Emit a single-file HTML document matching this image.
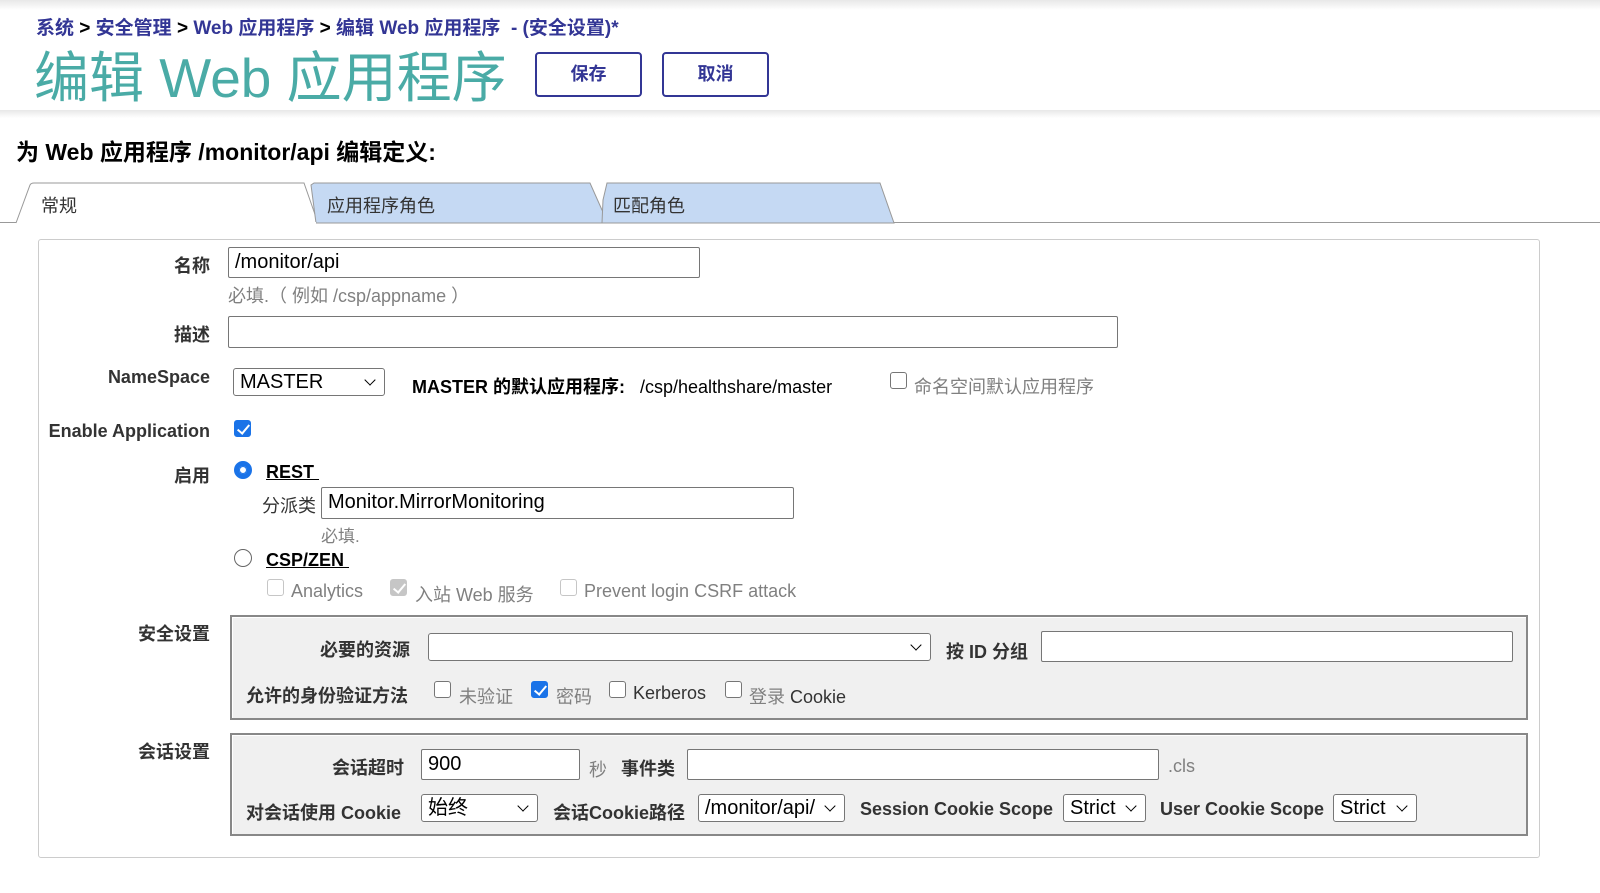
<!DOCTYPE html>
<html><head><meta charset="utf-8"><style>
*{box-sizing:border-box;margin:0;padding:0}
body{width:1600px;height:893px;position:relative;background:#fff;font-family:"Liberation Sans","Noto Sans CJK SC",sans-serif;color:#000;overflow:hidden}
.a{position:absolute;white-space:nowrap}
.lbl{font-size:18px;font-weight:bold;color:#333;text-align:right}
.inp{position:absolute;border:1px solid #767676;border-radius:2px;background:#fff;font-size:20px;padding:2px 6px;line-height:24px}
.sel{position:absolute;border:1px solid #767676;border-radius:3px;background:#fff;font-size:20px;padding:0 6px;line-height:26px}
.sel:after{content:"";position:absolute;right:10px;top:7px;width:7px;height:7px;border-right:1.5px solid #000;border-bottom:1.5px solid #000;transform:rotate(45deg)}
.cb{position:absolute;width:17px;height:17px;border:1px solid #767676;border-radius:3px;background:#fff}
.cb.on{background:#1a73e8;border-color:#1a73e8}
.cb.on:after{content:"";position:absolute;left:5px;top:1px;width:5px;height:10px;border-right:2px solid #fff;border-bottom:2px solid #fff;transform:rotate(40deg)}
.cb.dis{border-color:#c6c6c6}
.cb.dison{background:#c6c6c6;border-color:#c6c6c6}
.cb.dison:after{content:"";position:absolute;left:5px;top:1px;width:5px;height:10px;border-right:2px solid #fff;border-bottom:2px solid #fff;transform:rotate(40deg)}
.gray{color:#808080}
.box{position:absolute;border:2px solid #888;background:#f0f0f0;box-shadow:inset 1px 1px 0 #fff}
</style></head><body>
<div class="a" style="left:0;top:0;width:1600px;height:10px;background:linear-gradient(#e8e8e8,#fff)"></div>
<div class="a" style="left:36px;top:13px;font-size:19px;font-weight:bold;color:#333695">系统 <span style="color:#000">&gt;</span> 安全管理 <span style="color:#000">&gt;</span> Web 应用程序 <span style="color:#000">&gt;</span> 编辑 Web 应用程序 &nbsp;- (安全设置)*</div>
<div class="a" style="left:34px;top:45px;font-size:55px;color:#4aaba6;line-height:66px">编辑 Web 应用程序</div>
<div class="a" style="left:535px;top:52px;width:107px;height:45px;border:2px solid #333695;border-radius:4px;font-size:18px;font-weight:bold;color:#333695;text-align:center;line-height:41px">保存</div>
<div class="a" style="left:662px;top:52px;width:107px;height:45px;border:2px solid #333695;border-radius:4px;font-size:18px;font-weight:bold;color:#333695;text-align:center;line-height:41px">取消</div>
<div class="a" style="left:0;top:110px;width:1600px;height:8px;background:linear-gradient(#e8e8e8,#fff)"></div>
<div class="a" style="left:16px;top:133px;font-size:23px;font-weight:bold">为 Web 应用程序 /monitor/api 编辑定义:</div>
<svg class="a" style="left:0;top:180px" width="1600" height="46">
<line x1="0" y1="42.5" x2="1600" y2="42.5" stroke="#999" stroke-width="1"/>
<path d="M16 43 L30 5 Q31 3 34 3 L304 3 L318 43" fill="#fff" stroke="#999"/>
<path d="M316 43 L311 5 L314 3 L590 3 L602 30 L610 43 Z" fill="#c5d9f3" stroke="#999"/>
<path d="M602 43 L603 20 L607 3 L880 3 L894 43 Z" fill="#c5d9f3" stroke="#999"/>
<line x1="17" y1="43" x2="316" y2="43" stroke="#fff" stroke-width="2"/>
</svg>
<div class="a" style="left:41px;top:192px;font-size:18px;color:#333">常规</div>
<div class="a" style="left:327px;top:192px;font-size:18px;color:#333">应用程序角色</div>
<div class="a" style="left:613px;top:192px;font-size:18px;color:#333">匹配角色</div>
<div class="a" style="left:38px;top:239px;width:1502px;height:619px;border:1px solid #ccc;border-radius:3px"></div>

<div class="a lbl" style="left:100px;width:110px;top:252px">名称</div>
<div class="inp" style="left:228px;top:247px;width:472px;height:31px">/monitor/api</div>
<div class="a gray" style="left:228px;top:282px;font-size:18px">必填.（ 例如 /csp/appname ）</div>
<div class="a lbl" style="left:100px;width:110px;top:321px">描述</div>
<div class="inp" style="left:228px;top:316px;width:890px;height:32px"></div>
<div class="a lbl" style="left:60px;width:150px;top:367px">NameSpace</div>
<div class="sel" style="left:233px;top:368px;width:152px;height:28px">MASTER</div>
<div class="a" style="left:412px;top:373px;font-size:18px"><b>MASTER 的默认应用程序:</b> &nbsp;&nbsp;/csp/healthshare/master</div>
<div class="cb" style="left:890px;top:372px"></div>
<div class="a gray" style="left:914px;top:373px;font-size:18px">命名空间默认应用程序</div>
<div class="a lbl" style="left:40px;width:170px;top:421px">Enable Application</div>
<div class="cb on" style="left:234px;top:420px"></div>
<div class="a lbl" style="left:100px;width:110px;top:462px">启用</div>
<div class="a" style="left:234px;top:461px;width:18px;height:18px;border:5px solid #1a73e8;border-radius:50%;box-shadow:0 0 0 1px #1a73e8 inset"></div>
<div class="a" style="left:266px;top:462px;font-size:18px;font-weight:bold;text-decoration:underline">REST&nbsp;</div>
<div class="a" style="left:262px;top:492px;font-size:18px;color:#333">分派类</div>
<div class="inp" style="left:321px;top:487px;width:473px;height:32px">Monitor.MirrorMonitoring</div>
<div class="a gray" style="left:321px;top:522px;font-size:17px">必填.</div>
<div class="a" style="left:234px;top:549px;width:18px;height:18px;border:1px solid #666;border-radius:50%"></div>
<div class="a" style="left:266px;top:550px;font-size:18px;font-weight:bold;text-decoration:underline">CSP/ZEN&nbsp;</div>
<div class="cb dis" style="left:267px;top:579px"></div>
<div class="a gray" style="left:291px;top:581px;font-size:18px">Analytics</div>
<div class="cb dison" style="left:390px;top:579px"></div>
<div class="a gray" style="left:415px;top:581px;font-size:18px">入站 Web 服务</div>
<div class="cb dis" style="left:560px;top:579px"></div>
<div class="a gray" style="left:584px;top:581px;font-size:18px">Prevent login CSRF attack</div>

<div class="a lbl" style="left:100px;width:110px;top:620px">安全设置</div>
<div class="box" style="left:230px;top:615px;width:1298px;height:105px"></div>
<div class="a lbl" style="left:300px;width:110px;top:636px">必要的资源</div>
<div class="sel" style="left:428px;top:633px;width:503px;height:28px"></div>
<div class="a lbl" style="left:946px;top:638px">按 ID 分组</div>
<div class="inp" style="left:1041px;top:631px;width:472px;height:31px"></div>
<div class="a lbl" style="left:246px;top:682px">允许的身份验证方法</div>
<div class="cb" style="left:434px;top:681px"></div>
<div class="a gray" style="left:459px;top:683px;font-size:18px">未验证</div>
<div class="cb on" style="left:531px;top:681px"></div>
<div class="a gray" style="left:556px;top:683px;font-size:18px">密码</div>
<div class="cb" style="left:609px;top:681px"></div>
<div class="a" style="left:633px;top:683px;font-size:18px;color:#333">Kerberos</div>
<div class="cb" style="left:725px;top:681px"></div>
<div class="a gray" style="left:749px;top:683px;font-size:18px">登录 <span style="color:#333">Cookie</span></div>

<div class="a lbl" style="left:100px;width:110px;top:738px">会话设置</div>
<div class="box" style="left:230px;top:733px;width:1298px;height:103px"></div>
<div class="a lbl" style="left:300px;width:104px;top:754px">会话超时</div>
<div class="inp" style="left:421px;top:749px;width:159px;height:31px">900</div>
<div class="a gray" style="left:589px;top:756px;font-size:18px">秒</div>
<div class="a lbl" style="left:621px;top:755px">事件类</div>
<div class="inp" style="left:687px;top:749px;width:472px;height:31px"></div>
<div class="a gray" style="left:1168px;top:756px;font-size:18px">.cls</div>
<div class="a lbl" style="left:246px;top:799px">对会话使用 Cookie</div>
<div class="sel" style="left:421px;top:794px;width:117px;height:28px">始终</div>
<div class="a lbl" style="left:553px;top:799px">会话Cookie路径</div>
<div class="sel" style="left:698px;top:794px;width:147px;height:28px;padding-right:22px">/monitor/api/</div>
<div class="a lbl" style="left:860px;top:799px">Session Cookie Scope</div>
<div class="sel" style="left:1063px;top:794px;width:83px;height:28px">Strict</div>
<div class="a lbl" style="left:1160px;top:799px">User Cookie Scope</div>
<div class="sel" style="left:1333px;top:794px;width:84px;height:28px">Strict</div>
</body></html>
